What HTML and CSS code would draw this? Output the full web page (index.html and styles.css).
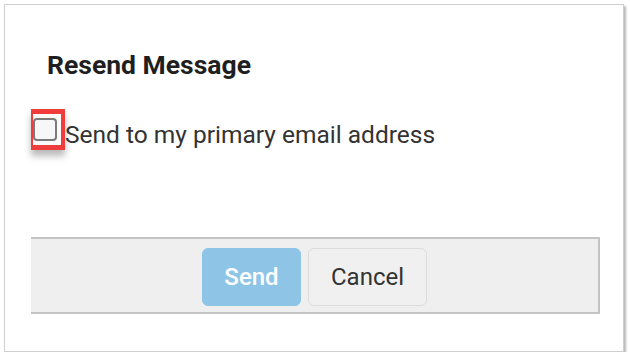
FILE: index.html
```html
<!DOCTYPE html>
<html>
<head>
<meta charset="utf-8">
<link rel="stylesheet" href="styles.css">
</head>
<body>
<div class="frame">
  <h2 class="title">Resend Message</h2>
  <label class="option">
    <span class="highlight"><span class="checkbox"></span></span>
    <span class="option-text">Send to my primary email address</span>
  </label>
  <div class="footer">
    <button class="btn btn-primary" disabled>Send</button>
    <button class="btn btn-default">Cancel</button>
  </div>
</div>
</body>
</html>
```

FILE: styles.css
```css
html, body {
  margin: 0;
  padding: 0;
  background: #ffffff;
}
body {
  font-family: Roboto, "Liberation Sans", Arial, sans-serif;
  color: #333333;
}
.frame {
  box-sizing: border-box;
  margin: 4px 0 0 4px;
  width: 620px;
  height: 348px;
  border: 1px solid #cfcfcf;
  box-shadow: 2px 2px 2px rgba(0, 0, 0, 0.28);
  padding: 46px 0 0 26px;
  display: flex;
  flex-direction: column;
  align-items: flex-start;
}
.title {
  margin: 0 0 30px 16px;
  font-size: 26.5px;
  line-height: 28px;
  font-weight: 700;
  color: #1f1f1f;
}
.option {
  display: flex;
  align-items: flex-start;
}
.highlight {
  display: block;
  border-style: solid;
  border-color: #ef3d3d;
  border-width: 5px 4px 5px 2px;
  padding: 4px 4px 4px 0;
  background: #fafafa;
  box-shadow: 0 6px 7px rgba(0, 0, 0, 0.28);
}
.checkbox {
  display: block;
  box-sizing: border-box;
  width: 24px;
  height: 23px;
  border: 2px solid #7a7a7a;
  border-radius: 4px;
  background: #f7f7f7;
}
.option-text {
  margin-top: 12px;
  font-size: 24.5px;
  line-height: 28px;
  color: #333333;
}
.footer {
  box-sizing: border-box;
  margin-top: 87px;
  width: 569px;
  height: 77px;
  background: #efefef;
  border-top: 2px solid #c4c4c4;
  border-bottom: 2px solid #c4c4c4;
  border-right: 2px solid #c4c4c4;
  padding-top: 9px;
  display: flex;
  justify-content: center;
  gap: 7px;
}
.btn {
  box-sizing: border-box;
  height: 58px;
  border-radius: 6px;
  font-family: Roboto, "Liberation Sans", Arial, sans-serif;
  font-size: 24px;
  padding: 0;
}
.btn-primary {
  width: 99px;
  background: #8ec5e6;
  border: 1px solid #8ec5e6;
  color: #ffffff;
  font-weight: 500;
}
.btn-default {
  width: 119px;
  background: #f0f0f0;
  border: 1px solid #dcdcdc;
  color: #333333;
}
```
